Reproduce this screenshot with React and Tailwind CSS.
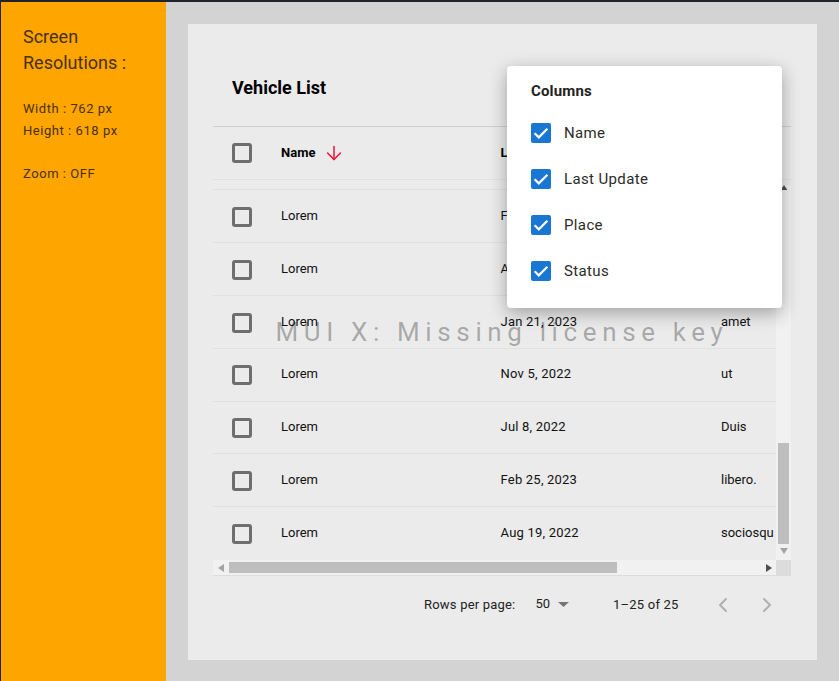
import { ArrowDown, ChevronLeft, ChevronRight } from "lucide-react";

const rows = [
  { name: "Lorem", date: "Feb 3, 2023", place: "dolor" },
  { name: "Lorem", date: "Apr 9, 2022", place: "sit" },
  { name: "Lorem", date: "Jan 21, 2023", place: "amet" },
  { name: "Lorem", date: "Nov 5, 2022", place: "ut" },
  { name: "Lorem", date: "Jul 8, 2022", place: "Duis" },
  { name: "Lorem", date: "Feb 25, 2023", place: "libero." },
  { name: "Lorem", date: "Aug 19, 2022", place: "sociosqu" },
];

const columns = ["Name", "Last Update", "Place", "Status"];

function EmptyBox() {
  return <div className="w-5 h-5 rounded-[3px] border-[3px] border-[#6e6e6e]" />;
}

function CheckedBox() {
  return (
    <svg width="20" height="20" viewBox="0 0 20 20" className="shrink-0">
      <rect width="20" height="20" rx="2" fill="#1976d2" />
      <path d="M3.6 10.2l4.2 4.2 8.6-8.6" fill="none" stroke="#fff" strokeWidth="2.2" />
    </svg>
  );
}

function Arrow({ dir }) {
  const points = {
    up: "0,6 4,0 8,6",
    down: "0,0 8,0 4,6",
    left: "6,0 6,8 0,4",
    right: "0,0 0,8 6,4",
  };
  const wide = dir === "up" || dir === "down";
  return (
    <svg width={wide ? 8 : 6} height={wide ? 6 : 8}>
      <polygon points={points[dir]} fill={dir === "up" || dir === "right" ? "#505050" : "#a3a3a3"} />
    </svg>
  );
}

export default function App() {
  return (
    <div className="relative w-[839px] h-[681px] overflow-hidden flex bg-[#d3d3d3] border-t-2 border-l border-[#20242a] font-['Roboto',sans-serif]">
      {/* Sidebar */}
      <aside className="w-[165px] shrink-0 bg-[#ffa500] pl-[22px] pt-[22px] text-[#4a3000]">
        <h2 className="text-[18px] leading-[26px]">
          Screen
          <br />
          Resolutions :
        </h2>
        <p className="mt-[22px] text-[13px] leading-[22px] tracking-[0.55px]">Width : 762 px</p>
        <p className="text-[13px] leading-[22px] tracking-[0.55px]">Height : 618 px</p>
        <p className="mt-[21px] text-[13px] leading-[22px] tracking-[0.55px]">Zoom : OFF</p>
      </aside>

      {/* Main Content */}
      <main className="flex-1 pl-[22px] pt-[22px]">
        <div className="w-[629px] h-[636px] bg-[#ebebeb] pl-[25px] pr-[26px]">
          <h1 className="h-[102px] pt-[50px] pl-[19px] text-[18px] leading-[27px] font-bold text-black">
            Vehicle List
          </h1>

          <div className="text-[13px] text-[#111]">
            <div className="flex items-center h-[54px] border-t border-b border-t-[#cfcfcf] border-b-[#e0e0e0] font-bold">
              <div className="w-[68px] pl-[19px] shrink-0">
                <EmptyBox />
              </div>
              <div className="w-[219.6px] shrink-0 flex items-center text-black">
                Name
                <ArrowDown size={22} strokeWidth={1.6} className="ml-[8px] text-[#f01030]" />
              </div>
              <div className="shrink-0 text-black">Last Update</div>
            </div>

            <div className="flex h-[380px]">
              <div className="w-[563px] overflow-hidden">
                <div className="h-[10.4px] border-b border-[#e0e0e0]" />
                {rows.map((row) => (
                  <div
                    key={row.date}
                    className="flex items-center h-[52.8px] border-b border-[#e0e0e0] last:border-b-0 whitespace-nowrap"
                  >
                    <div className="w-[68px] pl-[19px] shrink-0 mt-[1.4px]">
                      <EmptyBox />
                    </div>
                    <div className="w-[219.6px] shrink-0 -mt-[1.1px]">{row.name}</div>
                    <div className="w-[220.4px] shrink-0 -mt-[1.1px] tracking-[0.2px]">{row.date}</div>
                    <div className="w-[220px] shrink-0 -mt-[1.1px]">{row.place}</div>
                  </div>
                ))}
              </div>
              {/* Vertical scrollbar */}
              <div className="w-[15px] bg-[#f1f1f1] flex flex-col items-center">
                <div className="h-[5px] bg-[#ebebeb] w-full" />
                <Arrow dir="up" />
                <div className="flex-1 w-full px-[2px] pt-[253px] pb-[4px]">
                  <div className="h-[101px] bg-[#bebebe]" />
                </div>
                <div className="h-[10px] mb-[3px]">
                  <Arrow dir="down" />
                </div>
              </div>
            </div>

            {/* Horizontal scrollbar */}
            <div className="flex h-[16px] border-b border-[#dcdcdc]">
              <div className="w-[563px] bg-[#f1f1f1] flex items-center">
                <div className="w-[16px] flex justify-center">
                  <Arrow dir="left" />
                </div>
                <div className="w-[388px] h-[11px] bg-[#bebebe]" />
                <div className="flex-1 flex justify-end pr-[4px]">
                  <Arrow dir="right" />
                </div>
              </div>
              <div className="w-[15px] bg-[#dcdcdc]" />
            </div>
          </div>

          {/* Pagination */}
          <div className="flex items-center h-[57px] pl-[211px] text-[13px] text-[#222]">
            <span className="tracking-[0.2px]">Rows per page:</span>
            <span className="ml-[20px] text-[13px] -mt-[2px]">50</span>
            <svg width="11" height="5" className="ml-[8px]">
              <polygon points="0,0 11,0 5.5,5" fill="#757575" />
            </svg>
            <span className="ml-[44px] tracking-[0.2px]">1–25 of 25</span>
            <ChevronLeft size={24} strokeWidth={2} className="ml-[32px] text-[#b0b0b0]" />
            <ChevronRight size={24} strokeWidth={2} className="ml-[20px] text-[#b0b0b0]" />
          </div>
        </div>
      </main>

      {/* Watermark */}
      <div className="absolute left-[274.5px] top-[314px] text-[26px] leading-[32px] tracking-[5.63px] whitespace-nowrap text-[#000000]/30 pointer-events-none">
        MUI X: Missing license key
      </div>

      {/* Columns popover */}
      <div className="absolute left-[506px] top-[64px] w-[275px] h-[242px] bg-white rounded-[4px] shadow-[0_5px_18px_rgba(0,0,0,0.32)] pl-[24px] pt-[15px]">
        <h3 className="text-[15px] leading-[20px] font-bold tracking-[0.15px] text-[#222]">Columns</h3>
        <div className="mt-[9px]">
          {columns.map((col) => (
            <div key={col} className="flex items-center h-[46px] text-[15px] text-[#2b2b2b] tracking-[0.37px]">
              <CheckedBox />
              <span className="ml-[13px]">{col}</span>
            </div>
          ))}
        </div>
      </div>
    </div>
  );
}
